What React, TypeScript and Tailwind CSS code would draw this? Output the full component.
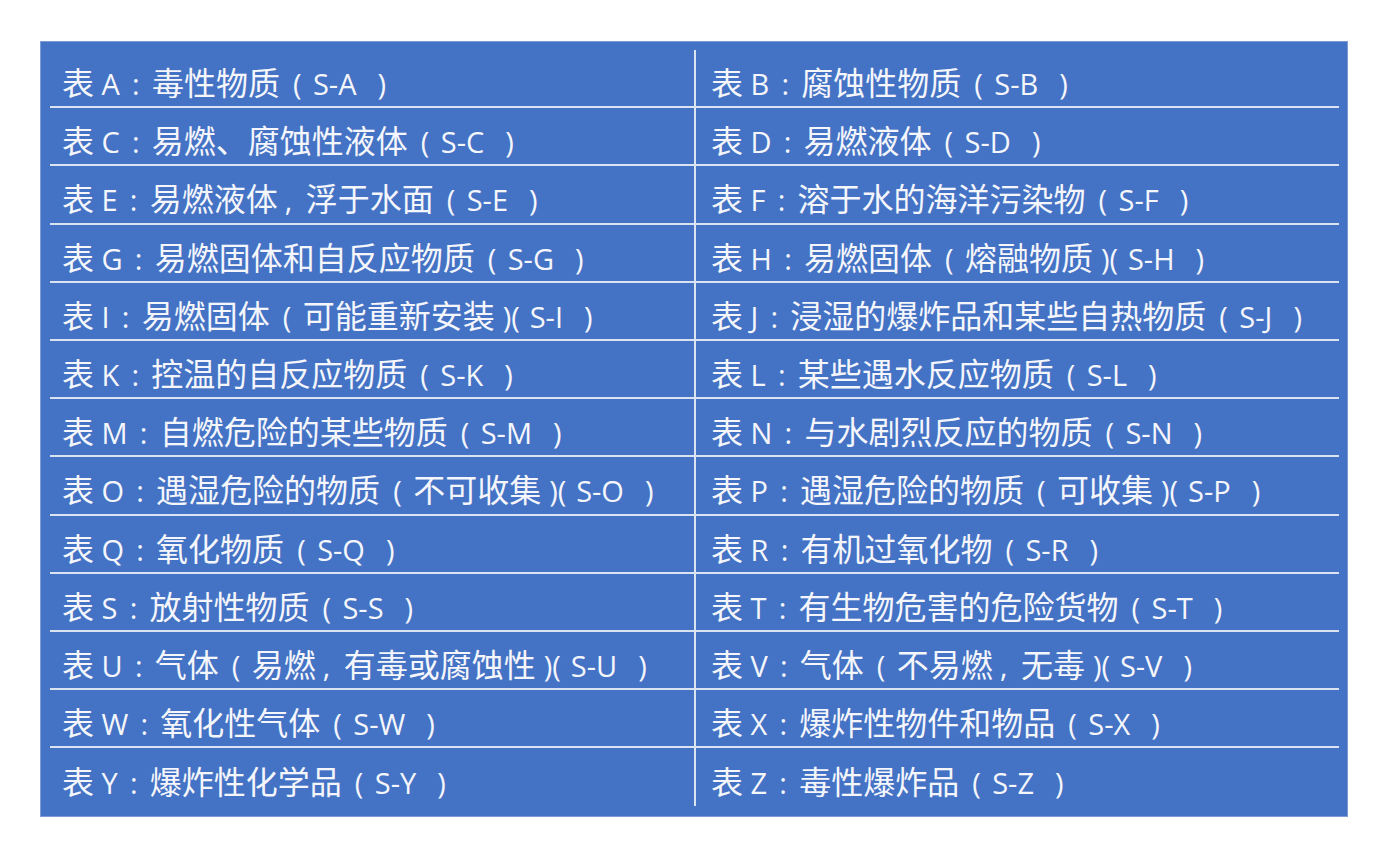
import React from 'react';

const ROWS: [string, string][] = [
  ['表 A：毒性物质（S-A）', '表 B：腐蚀性物质（S-B）'],
  ['表 C：易燃、腐蚀性液体（S-C）', '表 D：易燃液体（S-D）'],
  ['表 E：易燃液体，浮于水面（S-E）', '表 F：溶于水的海洋污染物（S-F）'],
  ['表 G：易燃固体和自反应物质（S-G）', '表 H：易燃固体（熔融物质）（S-H）'],
  ['表 I：易燃固体（可能重新安装）（S-I）', '表 J：浸湿的爆炸品和某些自热物质（S-J）'],
  ['表 K：控温的自反应物质（S-K）', '表 L：某些遇水反应物质（S-L）'],
  ['表 M：自燃危险的某些物质（S-M）', '表 N：与水剧烈反应的物质（S-N）'],
  ['表 O：遇湿危险的物质（不可收集）（S-O）', '表 P：遇湿危险的物质（可收集）（S-P）'],
  ['表 Q：氧化物质（S-Q）', '表 R：有机过氧化物（S-R）'],
  ['表 S：放射性物质（S-S）', '表 T：有生物危害的危险货物（S-T）'],
  ['表 U：气体（易燃，有毒或腐蚀性）（S-U）', '表 V：气体（不易燃，无毒）（S-V）'],
  ['表 W：氧化性气体（S-W）', '表 X：爆炸性物件和物品（S-X）'],
  ['表 Y：爆炸性化学品（S-Y）', '表 Z：毒性爆炸品（S-Z）'],
];

const LATIN = "font-['Open_Sans',sans-serif] text-[29px]";

// YaHei/Word-style setting: latin in a smaller western face,
// full-width punctuation drawn in its own cell, with Word's latin/CJK spacing
const Label: React.FC<{ text: string }> = ({ text }) => {
  const out: React.ReactNode[] = [];
  let i = 0;
  let k = 0;
  while (i < text.length) {
    const ch = text[i];
    if (ch === '）' && text[i + 1] === '（') {
      out.push(
        <span key={k++} className={`inline-block w-[35px] pl-[8px] ${LATIN}`}>
          )(
        </span>
      );
      i += 2;
    } else if (ch === '（') {
      out.push(
        <span key={k++} className={`inline-block w-[33px] pl-[13px] ${LATIN}`}>
          (
        </span>
      );
      i++;
    } else if (ch === '）') {
      out.push(
        <span key={k++} className={`inline-block w-[32px] pl-[21px] ${LATIN}`}>
          )
        </span>
      );
      i++;
    } else if (ch === '：') {
      out.push(
        <span key={k++} className={`inline-block w-[32px] text-center ${LATIN}`}>
          :
        </span>
      );
      i++;
    } else if (ch === '，') {
      out.push(
        <span key={k++} className={`inline-block w-[28px] pl-[7px] ${LATIN}`}>
          ,
        </span>
      );
      i++;
    } else if (/[A-Za-z\- ]/.test(ch)) {
      let j = i;
      while (j < text.length && /[A-Za-z\- ]/.test(text[j])) j++;
      out.push(
        <span key={k++} className={LATIN}>
          {text.slice(i, j)}
        </span>
      );
      i = j;
    } else {
      let j = i;
      while (j < text.length && !/[A-Za-z\- （）：，]/.test(text[j])) j++;
      out.push(<React.Fragment key={k++}>{text.slice(i, j)}</React.Fragment>);
      i = j;
    }
  }
  return <span className="whitespace-pre">{out}</span>;
};

const App: React.FC = () => {
  return (
    <div className="min-h-screen bg-white pt-[41px] pl-[40px]">
      <div className="w-[1308px] h-[776px] bg-[#4472c4] border border-[#7d9bd4] pt-[8px] pl-[9px]">
        <div className="grid grid-cols-[646px_643px] font-['Noto_Sans_CJK_SC',sans-serif] text-[32px] leading-none text-[#f4f6fb]">
          {ROWS.map(([left, right], idx) => {
            const last = idx === ROWS.length - 1;
            return (
              <React.Fragment key={idx}>
                <div
                  className={`h-[58.2px] flex items-center pl-[12px] pt-[7px] border-r-2 border-[#dbe3f3] ${
                    last ? '' : 'border-b-2'
                  }`}
                >
                  <Label text={left} />
                </div>
                <div
                  className={`h-[58.2px] flex items-center pl-[15px] pt-[7px] border-[#dbe3f3] ${
                    last ? '' : 'border-b-2'
                  }`}
                >
                  <Label text={right} />
                </div>
              </React.Fragment>
            );
          })}
        </div>
      </div>
    </div>
  );
};

export default App;
